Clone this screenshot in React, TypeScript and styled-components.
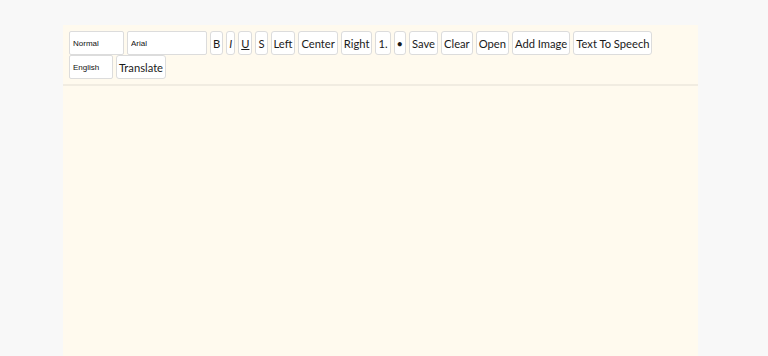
import React from "react";
import styled, { createGlobalStyle } from "styled-components";

const Global = createGlobalStyle`
  html, body { margin: 0; padding: 0; background: #f8f8f8; }
  body { font-family: "Lato", "Noto Sans", sans-serif; }
`;

const Page = styled.div`
  padding: 25px 0 0 63px;
`;

const Editor = styled.div`
  width: 635px;
  height: 331px;
  background: #fffaee;
  display: flex;
  flex-direction: column;
`;

const Toolbar = styled.div`
  display: flex;
  flex-wrap: wrap;
  column-gap: 3px;
  row-gap: 0;
  padding: 6px 6px 5px 6px;
  border-bottom: 2px solid #f1ece1;
`;

const Select = styled.select<{ $w: number }>`
  appearance: none;
  -webkit-appearance: none;
  width: ${(p) => p.$w}px;
  height: 24px;
  box-sizing: border-box;
  background: #fff;
  border: 1px solid #dcdcdc;
  border-radius: 2px;
  padding: 0 3px;
  font-family: "Liberation Sans", Arial, sans-serif;
  font-size: 8px;
  color: #111;
  outline: none;
`;

const Btn = styled.button<{ $style?: "b" | "i" | "u" }>`
  height: 24px;
  box-sizing: border-box;
  background: #fff;
  border: 1px solid #dcdcdc;
  border-radius: 3px;
  padding: 0 2px;
  font-family: "Lato", "Noto Sans", sans-serif;
  font-size: 11.2px;
  color: #1a1a1a;
  font-style: ${(p) => (p.$style === "i" ? "italic" : "normal")};
  text-decoration: ${(p) => (p.$style === "u" ? "underline" : "none")};
  cursor: pointer;
`;

const Body = styled.div`
  flex: 1;
`;

const buttons: { label: string; s?: "b" | "i" | "u" }[] = [
  { label: "B", s: "b" },
  { label: "I", s: "i" },
  { label: "U", s: "u" },
  { label: "S" },
  { label: "Left" },
  { label: "Center" },
  { label: "Right" },
  { label: "1." },
  { label: "•" },
  { label: "Save" },
  { label: "Clear" },
  { label: "Open" },
  { label: "Add Image" },
  { label: "Text To Speech" },
];

export default function App() {
  return (
    <>
      <Global />
      <Page>
        <Editor>
          <Toolbar>
            <Select $w={55} defaultValue="Normal">
              <option>Normal</option>
              <option>Heading 1</option>
              <option>Heading 2</option>
            </Select>
            <Select $w={80} defaultValue="Arial">
              <option>Arial</option>
              <option>Times New Roman</option>
            </Select>
            {buttons.map((b) => (
              <Btn key={b.label} $style={b.s}>
                {b.label}
              </Btn>
            ))}
            <Select $w={44} defaultValue="English">
              <option>English</option>
              <option>Hindi</option>
            </Select>
            <Btn>Translate</Btn>
          </Toolbar>
          <Body />
        </Editor>
      </Page>
    </>
  );
}
